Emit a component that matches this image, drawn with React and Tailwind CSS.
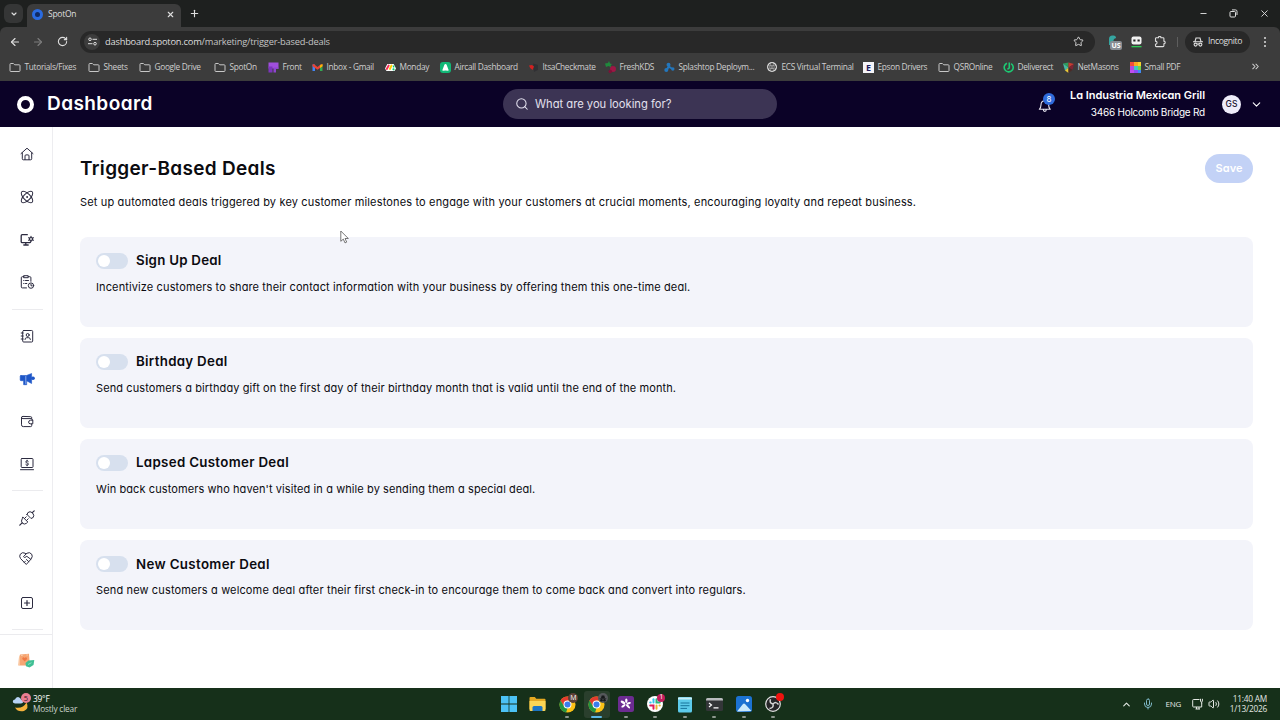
import { ArrowLeft, ArrowRight, ChevronDown, ChevronUp, ChevronsRight, Globe, Mic, Minus, Plus, RotateCw, Search, Star, Volume2, X } from 'lucide-react';

const bookmarks = [
  { icon: 'folder', label: 'Tutorials/Fixes', width: 'w-[79px]' },
  { icon: 'folder', label: 'Sheets', width: 'w-[51px]' },
  { icon: 'folder', label: 'Google Drive', width: 'w-[75px]' },
  { icon: 'folder', label: 'SpotOn', width: 'w-[54px]' },
  { icon: 'front', label: 'Front', width: 'w-[44px]' },
  { icon: 'gmail', label: 'Inbox - Gmail', width: 'w-[73px]' },
  { icon: 'monday', label: 'Monday', width: 'w-[55px]' },
  { icon: 'aircall', label: 'Aircall Dashboard', width: 'w-[88px]' },
  { icon: 'itsa', label: 'ItsaCheckmate', width: 'w-[77px]' },
  { icon: 'fresh', label: 'FreshKDS', width: 'w-[59px]' },
  { icon: 'splash', label: 'Splashtop Deploym...', width: 'w-[103px]' },
  { icon: 'globe', label: 'ECS Virtual Terminal', width: 'w-[96px]' },
  { icon: 'epson', label: 'Epson Drivers', width: 'w-[75px]' },
  { icon: 'folder', label: 'QSROnline', width: 'w-[65px]' },
  { icon: 'deliverect', label: 'Deliverect', width: 'w-[60px]' },
  { icon: 'netmasons', label: 'NetMasons', width: 'w-[67px]' },
  { icon: 'pdf', label: 'Small PDF', width: 'w-[60px]' },
];

const deals = [
  {
    title: 'Sign Up Deal',
    titleClass: 'tracking-[0.240px]',
    text: 'Incentivize customers to share their contact information with your business by offering them this one-time deal.',
    textClass: 'tracking-[0.120px]',
  },
  {
    title: 'Birthday Deal',
    titleClass: 'tracking-[0.300px]',
    text: 'Send customers a birthday gift on the first day of their birthday month that is valid until the end of the month.',
    textClass: 'tracking-[0.107px]',
  },
  {
    title: 'Lapsed Customer Deal',
    titleClass: 'tracking-[0.320px]',
    text: "Win back customers who haven't visited in a while by sending them a special deal.",
    textClass: 'tracking-[0.090px]',
  },
  {
    title: 'New Customer Deal',
    titleClass: 'tracking-[0.350px]',
    text: 'Send new customers a welcome deal after their first check-in to encourage them to come back and convert into regulars.',
    textClass: 'tracking-[0.140px]',
  },
];

function BookmarkIcon({ name }) {
  const box = 'h-[11px] w-[11px] shrink-0';
  switch (name) {
    case 'folder':
      return (
        <svg className="h-[11px] w-3 shrink-0" viewBox="0 0 12 11" fill="none" stroke="#c7c7c7" strokeWidth="1">
          <path d="M1 2.300q0-.8.8-.8H4.400l1.300 1.300H10.200q.8 0 .8.8V8.700q0 .8-.8.8H1.800q-.8 0-.8-.8Z" />
        </svg>
      );
    case 'front':
      return (
        <svg className={box} viewBox="0 0 11 11">
          <path d="M.5.500h10v6H.5z" fill="#a04fdd" />
          <path d="M.5 4.500h4v6h-4z" fill="#7c35bd" />
          <path d="M5.500 5.500h5v1.500H8v3.500H5.500z" fill="#8f45d0" />
        </svg>
      );
    case 'gmail':
      return (
        <svg className={box} viewBox="0 0 11 11">
          <path d="M.5 2.500H3V9H.5z" fill="#4285f4" />
          <path d="M8 2.500h2.500V9H8z" fill="#34a853" />
          <path d="M.5 2.500 1.800 2l3.700 2.900L9.200 2l1.300.5v1.800l-5 3.500-5-3.500z" fill="#ea4335" />
          <path d="M8 3.500 10.500 2v2.300L8 6z" fill="#fbbc04" />
        </svg>
      );
    case 'monday':
      return (
        <svg className={box} viewBox="0 0 11 11">
          <path d="M2.300 2h6.400L11 6.500 9.500 9h-8L0 6.500z" fill="#fff" />
          <g strokeWidth="1.900" strokeLinecap="round">
            <path d="M3.700 3.500 1.800 7" stroke="#f62b54" />
            <path d="M6.500 3.500 4.900 7" stroke="#fc0" />
          </g>
          <path d="M8.600 3.500v2" stroke="#00ca72" strokeWidth="1.500" />
          <circle cx="8.500" cy="7.300" r="1.100" fill="#00ca72" />
        </svg>
      );
    case 'aircall':
      return (
        <svg className={box} viewBox="0 0 11 11">
          <rect width="11" height="11" rx="3" fill="#12b877" />
          <path d="M5.500 2q.8 0 1.100.8l2 5.200q.2.900-.7.800-2.400-.4-4.800 0-.9.100-.7-.8l2-5.200Q4.700 2 5.500 2Z" fill="#fff" />
        </svg>
      );
    case 'itsa':
      return (
        <svg className={box} viewBox="0 0 11 11">
          <path d="M5 1.500 10 3v5L6 10z" fill="#303034" />
          <path d="M1 3.500 4 3l2 1.500L4.500 8Q2 7 1 3.500Z" fill="#d32020" />
        </svg>
      );
    case 'fresh':
      return (
        <svg className="-mr-px -ml-px h-[13px] w-[13px] shrink-0" viewBox="0 0 13 13">
          <path d="M1 2.500 4 2l1-2 1 2.500L8 3 6.500 4.500l1 2L4.500 5 2 6z" fill="#1f8a3c" />
          <circle cx="9" cy="8" r="3" fill="#9d1745" />
          <circle cx="6.300" cy="10.500" r="1.800" fill="#7d1237" />
        </svg>
      );
    case 'splash':
      return (
        <svg className={box} viewBox="0 0 11 11" fill="#2377bd">
          <circle cx="4.500" cy="2.700" r="2" />
          <circle cx="2.300" cy="8" r="2" />
          <circle cx="8.800" cy="7" r="1.700" />
          <path d="M2 7 4.500 3l4.500 3.500-1 1L5 6 3.500 9z" />
        </svg>
      );
    case 'globe':
      return (
        <span className="mr-px flex h-[10px] w-[10px] shrink-0 items-center justify-center rounded-full bg-[#dadada]">
          <Globe className="h-2 w-2 text-[#4a4a4a]" strokeWidth={3} />
        </span>
      );
    case 'epson':
      return (
        <span className="flex h-[11px] w-[11px] shrink-0 items-center justify-center bg-[#f4f4f8] text-[9px] leading-none font-bold text-[#1b1b5c]">
          E
        </span>
      );
    case 'deliverect':
      return (
        <svg className={box} viewBox="0 0 11 11" fill="none" stroke="#1dc973" strokeWidth="1.600">
          <path d="M4 1.200a4.500 4.500 0 1 0 4.200.4" />
          <path d="M6.300.5v5q-.2 1.500-2 1.200" />
        </svg>
      );
    case 'netmasons':
      return (
        <svg className={box} viewBox="0 0 11 11">
          <path d="M0 1.500 5.500.5v5z" fill="#2d9d5b" />
          <path d="M5.500.5 11 2 5.500 5.500z" fill="#c53b32" />
          <path d="M0 1.500 5.500 5.500 2 8.500z" fill="#46b9a2" />
          <path d="M5.500 5.500 11 2 9.500 8z" fill="#7b2433" />
          <path d="M2 8.500 5.500 5.500V11z" fill="#e8c93a" />
          <path d="M5.500 5.500 9.500 8l-4 3z" fill="#4d2a27" />
        </svg>
      );
    default:
      return (
        <svg className={box} viewBox="0 0 11 11">
          <path d="M0 0h4v4H0z" fill="#f0503c" />
          <path d="M4 0h4v4H4z" fill="#f7a823" />
          <path d="M8 0h3v4H8z" fill="#f6d22c" />
          <path d="M0 4h4v4H0z" fill="#b548e0" />
          <path d="M4 4h4v4H4z" fill="#3fc8c0" />
          <path d="M8 4h3v4H8z" fill="#6fd34e" />
          <path d="M0 8h4v3H0z" fill="#c04df0" />
          <path d="M4 8h4v3H4z" fill="#8b4df5" />
          <path d="M8 8h3v3H8z" fill="#3f8bf4" />
        </svg>
      );
  }
}

function BrowserChrome() {
  return (
    <div className="h-[81px] shrink-0 bg-[#1e201f] font-['Open_Sans','Noto_Sans',sans-serif] text-[#dedede]">
      <div className="flex h-[27px] items-start">
        <div className="mt-1 ml-1 flex h-[19px] w-[19px] items-center justify-center rounded-md bg-[#353636]">
          <ChevronDown className="h-2 w-2" strokeWidth={3.5} />
        </div>
        <div className="mt-1 ml-1 flex h-[23px] w-[154px] items-center rounded-t-md bg-[#3c3c3c] pr-[6px] pb-[3px] pl-[5px]">
          <span className="h-[11px] w-[11px] rounded-full border-[3.5px] border-[#2a6be0] bg-[#102a63]" />
          <span className="ml-[5px] flex-1 text-[8.500px] tracking-[-0.25px]">SpotOn</span>
          <X className="h-[9px] w-[9px]" strokeWidth={3} />
        </div>
        <div className="flex h-[27px] flex-1 items-center">
          <Plus className="ml-2 h-[11px] w-[11px]" strokeWidth={2.5} />
        </div>
        <div className="flex h-[27px] items-center">
          <Minus className="mr-[21px] h-[9px] w-[9px]" strokeWidth={2.5} />
          <svg className="h-[9px] w-[9px]" viewBox="0 0 9 9" fill="none" stroke="currentColor">
            <rect x="1" y="2.500" width="5.500" height="5.500" rx="1" />
            <path d="M3 .9h3.500q1.500 0 1.500 1.500V6" />
          </svg>
          <X className="mr-[10px] ml-[21px] h-[11px] w-[11px]" strokeWidth={2} />
        </div>
      </div>

      <div className="flex h-[29px] items-center rounded-t-md bg-[#3c3c3c]">
        <ArrowLeft className="ml-[9px] h-3 w-3" strokeWidth={2.300} />
        <ArrowRight className="ml-[11px] h-3 w-3 text-[#7c7c7c]" strokeWidth={2.300} />
        <RotateCw className="ml-[13px] h-[11px] w-[11px]" strokeWidth={2.400} />
        <div className="ml-[12px] flex h-[22px] w-[1015px] items-center rounded-full bg-[#282828] pr-[11px] pl-1">
          <span className="flex h-4 w-4 items-center justify-center rounded-full bg-[#3c3c3c]">
            <svg className="h-[9px] w-[9px]" viewBox="0 0 9 9" fill="none" stroke="currentColor">
              <circle cx="2" cy="2.300" r="1.300" />
              <path d="M4.500 2.300H9M0 6.700h4.500" />
              <circle cx="7" cy="6.700" r="1.300" />
            </svg>
          </span>
          <span className="ml-[5px] flex-1 text-[9.300px] tracking-[-0.21px] whitespace-nowrap">
            dashboard.spoton.com<span className="text-[#c4c4c4]">/marketing/trigger-based-deals</span>
          </span>
          <Star className="h-[11px] w-[11px]" strokeWidth={2} />
        </div>
        <span className="relative ml-[13px] h-[14px] w-[13px]">
          <svg className="h-[11px] w-[11px]" viewBox="0 0 11 11">
            <path d="M1 10V4q0-3.500 3.500-3.500h1Q8 .5 8 3L6 4 4 10z" fill="#35a5a0" />
          </svg>
          <span className="absolute top-[6px] left-[2px] flex h-[9px] w-[12px] items-center justify-center rounded-[2px] bg-[#888d94] text-[7px] leading-none font-bold text-white">
            US
          </span>
        </span>
        <svg className="ml-[10px] h-3 w-[11px]" viewBox="0 0 11 12">
          <rect x=".5" y=".5" width="10" height="8" rx="2" fill="#f2f2f2" />
          <path d="M2.300 3.500h2.200v2H2.300zM6.500 3.500h2.200v2H6.500z" fill="#222" />
          <path d="M.5 10h10v1.300H.5z" fill="#2ecc55" />
        </svg>
        <svg className="ml-[12px] h-3 w-3" viewBox="0 0 12 12" fill="none" stroke="currentColor" strokeWidth="1.100">
          <path d="M2.500 1.700h1.900a1.300 1.300 0 0 1 2.600 0H9q.9 0 .9.900v2.500a1.300 1.300 0 0 1 0 2.600V9.700q0 .9-.9.900H2.300q-.8 0-.8-.9V8.200a1.500 1.500 0 0 0 0-3.100V2.600q0-.9 1-.9z" />
        </svg>
        <span className="ml-[11px] h-[10px] w-px bg-[#5e5e5e]" />
        <div className="ml-[7px] flex h-[22px] w-[65px] items-center rounded-full bg-[#282828] pl-2">
          <svg className="h-[10px] w-[10px]" viewBox="0 0 10 10" fill="none" stroke="currentColor" strokeWidth="1.100">
            <path d="M0 4.700h10M2 4.500 3 1h4l1 3.500M4.200 7.200q.8-.6 1.600 0" />
            <circle cx="2.600" cy="7.600" r="1.500" />
            <circle cx="7.400" cy="7.600" r="1.500" />
          </svg>
          <span className="mt-px ml-[5px] text-[8.700px] tracking-[-0.4px]">Incognito</span>
        </div>
        <span className="ml-[14px] flex flex-col gap-[2px]">
          <span className="h-[2px] w-[2px] rounded-full bg-[#dedede]" />
          <span className="h-[2px] w-[2px] rounded-full bg-[#dedede]" />
          <span className="h-[2px] w-[2px] rounded-full bg-[#dedede]" />
        </span>
      </div>

      <div className="flex h-[25px] items-start bg-[#3c3c3c] pl-[9px] text-[8.300px] text-[#cfcfcf]">
        {bookmarks.map((item) => (
          <div key={item.label} className={`flex h-[22px] shrink-0 items-center ${item.width}`}>
            <BookmarkIcon name={item.icon} />
            <span className="ml-[3.500px] tracking-[-0.3px] whitespace-nowrap">{item.label}</span>
          </div>
        ))}
        <ChevronsRight className="mt-[5px] ml-[60px] h-[11px] w-[11px]" strokeWidth={2.300} />
      </div>
    </div>
  );
}

function Header() {
  return (
    <header className="flex h-[46px] shrink-0 items-center bg-[#0b0227] text-white">
      <span className="ml-[17px] h-[17px] w-[17px] rounded-full border-[4.500px] border-white" />
      <span className="ml-[13px] w-[456px] text-[19px] font-semibold tracking-[0.430px]">Dashboard</span>
      <div className="flex h-[30px] w-[274px] items-center rounded-full bg-[#3c3454] text-[#e3e0ee]">
        <Search className="ml-3 h-[14px] w-[14px]" strokeWidth={1.800} />
        <span className="mt-px ml-[6px] text-[11.200px] whitespace-nowrap">What are you looking for?</span>
      </div>
      <div className="relative ml-[261px] h-[18px] w-[18px]">
        <svg className="mt-1 h-[14px] w-[14px]" viewBox="0 0 14 14" fill="none" stroke="#e8e6f0" strokeWidth="1.100" strokeLinejoin="round">
          <path d="M1.300 10.300Q3 8.800 3 5.800 3 2 6.800 1.800q3.800.2 3.800 4 0 3 1.700 4.500zM5.300 10.500q0 1.900 1.500 1.900t1.500-1.900" />
        </svg>
        <span className="absolute -top-[2px] left-[5px] flex h-[12px] w-[12px] items-center justify-center rounded-full bg-[#2f6bdc] text-[8px] leading-none text-white">
          8
        </span>
      </div>
      <div className="mb-[2px] flex w-[149px] flex-col items-end whitespace-nowrap">
        <span className="text-[11px] leading-[17px] font-semibold tracking-[-0.03px]">La Industria Mexican Grill</span>
        <span className="text-[10px] leading-[16px] tracking-[-0.23px]">3466 Holcomb Bridge Rd</span>
      </div>
      <span className="ml-[17px] flex h-[19px] w-[19px] items-center justify-center rounded-full bg-[#efedfa] text-[8.500px] font-medium text-[#1a1530]">
        GS
      </span>
      <ChevronDown className="ml-[9px] h-[13px] w-[13px]" strokeWidth={2} />
    </header>
  );
}

function NavItem({ children }) {
  return (
    <div className="flex h-[42.670px] shrink-0 items-center justify-center pl-px">
      <svg className="h-4 w-4" viewBox="0 0 16 16" fill="none" stroke="#2c2b40" strokeWidth="1" strokeLinecap="round" strokeLinejoin="round">
        {children}
      </svg>
    </div>
  );
}

function NavDivider() {
  return <div className="mr-[9px] ml-3 my-[5px] h-px shrink-0 bg-[#ebebee]" />;
}

function Sidebar() {
  return (
    <aside className="flex w-[53px] shrink-0 flex-col border-r border-[#ededf0] bg-white">
      <nav className="flex h-[508px] shrink-0 flex-col border-b border-[#ebebee] pt-[6px]">
        <NavItem>
          <path d="M2 7.600 8 2.200l6 5.400M3.300 6.800v6q0 1 1 1h7.400q1 0 1-1v-6M6 13.500V9.900q0-1 1-1h2q1 0 1 1v3.600" />
        </NavItem>
        <NavItem>
          <ellipse cx="8" cy="8" rx="7.400" ry="3.300" transform="rotate(45 8 8)" />
          <ellipse cx="8" cy="8" rx="7.400" ry="3.300" transform="rotate(-45 8 8)" />
          <circle cx="8" cy="8" r=".5" />
        </NavItem>
        <NavItem>
          <path d="M8.300 2.700H3.200q-1 0-1 1v6q0 1 1 1h7.600q.7 0 .7-.9M6.800 10.700v2.300M4.800 13h4.400" strokeWidth="1.300" />
          <circle cx="12" cy="7" r="1.500" strokeWidth="1.200" />
          <path d="M12 4.400v.9M12 8.700v.9M9.700 5.700l.8.500M13.500 7.800l.8.500M9.700 8.300l.8-.5M13.500 6.200l.8-.5" strokeWidth="1.200" />
        </NavItem>
        <NavItem>
          <path d="M5 2.700H3.300q-1 0-1 1v9.200q0 1 1 1h4.200M9.200 2.700h1.700q1 0 1 1v3.600" />
          <path d="M5 1.700h4.200v2H5zM4.700 6.500h.3M6.500 6.500h3M4.700 9.500h.3M6.500 9.500h1.300" />
          <circle cx="12" cy="11.600" r="2.700" />
          <path d="M12 10.200v1.600h1.200" />
        </NavItem>
        <NavDivider />
        <NavItem>
          <rect x="3.700" y="2.500" width="10" height="11.500" rx="1" />
          <path d="M2.200 5h2M2.200 8h2M2.200 11h2M6 11.500q0-1.800 1.700-1.800h2q1.700 0 1.700 1.800" />
          <circle cx="8.700" cy="7" r="1.500" />
        </NavItem>
        <NavItem>
          <path d="M2 4.500h5.500L12.600 2.500v10L7.500 9.700H7.700v4H4.600v-4H2q-.8 0-.8-.8V5.300q0-.8.8-.8z" fill="#1f57c8" stroke="#1f57c8" strokeWidth=".6" />
          <path d="M6.800 5.500v7" stroke="#a9c2f3" strokeWidth=".8" />
          <path d="M13.800 7.200h.3" stroke="#1f57c8" strokeWidth="3.500" />
        </NavItem>
        <NavItem>
          <path d="M12.700 5.300V4.700q0-1-1-1L4 3.400Q2.500 3.300 2.500 4.600v7.200q0 1.800 1.800 1.800h7.400q1 0 1-1v-1.500M2.500 4.600q.2 1 1.500 1h8.200q1 0 1 1v.7" />
          <path d="M13.800 7.300v3.500h-2.700q-1.500-.2-1.500-1.700t1.500-1.800z" />
        </NavItem>
        <NavItem>
          <rect x="2.200" y="2.500" width="11.800" height="9" rx=".8" />
          <path d="M1.500 13.700h13M9.300 5.500q-.5-.6-1.200-.6-1.300 0-1.300 1t1.300 1.100 1.300 1.100-1.300 1q-.8 0-1.300-.6M8.100 4.200v.7M8.100 9.100v.7" />
        </NavItem>
        <NavDivider />
        <NavItem>
          <path d="m.8 15.200 2.300-2.300M15.200.8l-1.900 1.900" strokeWidth="1.200" />
          <path d="m4 7.200 4.800 4.800-1.200 1.200q-2 1.600-4 .2-2.200-2-.4-4.800zM5.500 8.500l1.700-1.700M7.500 10.500l1.700-1.700" />
          <path d="m8 4.500 4 4q3-.5 2.800-3.200Q14 2 11 1.700 8.200 2 8 4.500Z" />
        </NavItem>
        <div className="-mt-[2px] mb-[2px] pr-px">
          <NavItem>
            <path d="M8 14.200 2.500 8.500Q1 6.300 2.300 4.200 4.300 1.700 7 3.200l1 .8 1-.8q2.700-1.500 4.700 1 1.300 2.100-.2 4.300z" />
            <path d="M8 4 5.500 6.700q.8 1.500 2.500.2l.8-.6 4 3M6.300 12.300l1.200-1.200M8.500 9.500l2.300 2.200" />
          </NavItem>
        </div>
        <NavItem>
          <rect x="2.500" y="2.500" width="11" height="11" rx="1.500" />
          <path d="M8 5.500v5M5.500 8h5" strokeWidth="1.200" />
        </NavItem>
        <NavDivider />
      </nav>
      <div className="flex flex-1 items-center justify-center pb-[3px] pl-px">
        <svg className="h-[17px] w-[17px]" viewBox="0 0 17 17">
          <path d="m2 2.500 9-.8.800 11.800H1.500z" fill="#f6a673" />
          <path d="m1 5 1-2.500v11H0z" fill="#f9c6a0" />
          <path d="M3.300 3.500h1.200M8.500 3h1.200" stroke="#fbd9bd" />
          <path d="M6.700 9.500 4.200 7q0-2 1.500-1.700l1 .8.9-.8q1.700-.2 1.500 1.600z" fill="#ef7a45" />
          <path d="m7.500 11 3-2.500 5.800-.5-.8 5-4 2.500-3.500-1.300z" fill="#3fbf94" />
          <path d="m10 12.500 3.500-1.800" stroke="#8ee0c2" />
        </svg>
      </div>
    </aside>
  );
}

function DealCard({ deal }) {
  return (
    <section className="h-[90px] rounded-lg bg-[#f3f4fa] px-4 pt-4">
      <div className="flex h-4 items-center gap-2">
        <span className="flex h-4 w-8 items-center rounded-full bg-[#d7e0ee] pl-[2px]">
          <span className="h-3 w-3 rounded-full bg-white" />
        </span>
        <h2 className={`text-[13.300px] font-semibold whitespace-nowrap ${deal.titleClass}`}>{deal.title}</h2>
      </div>
      <p className={`mt-[10px] text-[11px] leading-4 whitespace-nowrap ${deal.textClass}`}>{deal.text}</p>
    </section>
  );
}

function Content() {
  return (
    <main className="flex-1 bg-white pt-[27px] pr-[27px] pl-[27px] text-[#0b0b10]">
      <div className="flex h-[29px] items-center justify-between">
        <h1 className="pt-px text-[19px] font-semibold tracking-[0.320px]">Trigger-Based Deals</h1>
        <button className="h-[29px] w-12 rounded-full bg-[#c3d2f6] text-[11px] font-semibold text-white">Save</button>
      </div>
      <p className="mt-[11px] text-[11px] leading-4 tracking-[0.155px] whitespace-nowrap">
        Set up automated deals triggered by key customer milestones to engage with your customers at crucial moments, encouraging loyalty and repeat business.
      </p>
      <div className="mt-[26.500px] flex flex-col gap-[11.330px]">
        {deals.map((deal) => (
          <DealCard key={deal.title} deal={deal} />
        ))}
      </div>
    </main>
  );
}

function ChromeLogo() {
  return (
    <svg className="h-[17px] w-[17px]" viewBox="0 0 18 18">
      <circle cx="9" cy="9" r="8.500" fill="#fbc116" />
      <path d="M1.600 4.800A8.500 8.500 0 0 1 16.400 4.800H9L5.300 11z" fill="#e33b2e" />
      <path d="M1.600 4.800 5.500 11 9 13l-1.500 4.400A8.500 8.500 0 0 1 1.600 4.800Z" fill="#229342" />
      <circle cx="9" cy="9" r="4.200" fill="#fff" />
      <circle cx="9" cy="9" r="3.200" fill="#3b7ded" />
    </svg>
  );
}

function TaskIcon({ children, state }) {
  return (
    <div className={`relative flex h-[27px] w-[26px] items-center justify-center rounded-[3px] ${state === 'active' ? 'bg-[#2a3f2d]' : ''}`}>
      {children}
      {state === 'open' && <span className="absolute bottom-0 h-[2px] w-1 rounded-full bg-[#8d978e]" />}
      {state === 'active' && <span className="absolute bottom-0 h-[2px] w-[11px] rounded-full bg-[#5cb8e6]" />}
    </div>
  );
}

function Taskbar() {
  return (
    <footer className="flex h-8 shrink-0 items-center bg-[#16301a] font-['Open_Sans','Noto_Sans',sans-serif] text-[8.300px] text-white">
      <div className="flex w-[495.500px] items-center">
        <svg className="mb-[3px] ml-3 h-[20px] w-[20px]" viewBox="0 0 20 20">
          <path d="M14.500 9.500q3 6-2.500 8.500-6 1.500-9-3.500 8 1.500 11.500-5Z" fill="#f6b23c" />
          <path d="M3 10.500q-2.500-.3-2.200-2.200Q1.200 6.500 3 6.600q.9-3 3.800-2.400 2 .5 2.300 2.500 2.400.2 2.200 2.100-.3 1.700-2.300 1.700z" fill="#b8d3f5" />
          <circle cx="14" cy="5" r="5" fill="#ea7f92" />
          <text x="14" y="7.800" textAnchor="middle" fontSize="7.500" fill="#3a1520">5</text>
        </svg>
        <div className="ml-[1px] leading-[10.500px] tracking-[-0.2px] whitespace-nowrap">
          <div>39°F</div>
          <div className="text-[#ccd5cd]">Mostly clear</div>
        </div>
      </div>

      <div className="flex w-[620px] gap-[3.400px]">
        <TaskIcon>
          <svg className="h-4 w-4" viewBox="0 0 16 16" fill="#4cc2f5">
            <path d="M0 0h7.600v7.600H0zM8.400 0H16v7.600H8.400zM0 8.400h7.600V16H0zM8.400 8.400H16V16H8.400z" />
          </svg>
        </TaskIcon>
        <TaskIcon>
          <svg className="h-4 w-[17px]" viewBox="0 0 17 16">
            <path d="M.5 2q0-1 1-1h4.300l1.500 1.700H15.500q1 0 1 1V13H.5z" fill="#e5a822" />
            <path d="M.5 5h16v9q0 1-1 1h-14q-1 0-1-1z" fill="#fbd555" />
            <path d="M3.500 11.500q0-1.500 1.500-1.500h7q1.500 0 1.500 1.500V15h-10z" fill="#1c75c4" />
          </svg>
        </TaskIcon>
        <TaskIcon state="open">
          <ChromeLogo />
          <span className="absolute top-[2px] right-[2px] flex h-[10px] w-[10px] items-center justify-center rounded-full bg-[#5c4037] text-[7px] leading-none">M</span>
        </TaskIcon>
        <TaskIcon state="active">
          <ChromeLogo />
          <svg className="absolute top-[2px] right-[2px] h-[10px] w-[10px]" viewBox="0 0 10 10">
            <circle cx="5" cy="5" r="5" fill="#55585b" />
            <path d="M3 5 3.700 2.500h2.600L7 5l2 .7H1z" fill="#17191a" />
            <circle cx="3.500" cy="7.300" r="1.300" fill="#17191a" />
            <circle cx="6.500" cy="7.300" r="1.300" fill="#17191a" />
          </svg>
        </TaskIcon>
        <TaskIcon state="open">
          <svg className="h-4 w-4" viewBox="0 0 16 16">
            <rect width="16" height="16" rx="2.500" fill="#6c2c91" />
            <g fill="#fff">
              <ellipse cx="5" cy="6.300" rx="2.600" ry="1.300" transform="rotate(30 5 6.300)" />
              <ellipse cx="8.300" cy="4.800" rx="1.200" ry="2.300" />
              <ellipse cx="10.700" cy="7.300" rx="2.300" ry="1.100" transform="rotate(-20 10.700 7.300)" />
              <ellipse cx="5.500" cy="9.800" rx="2.500" ry="1.100" transform="rotate(-35 5.500 9.800)" />
              <ellipse cx="10" cy="10.300" rx="2.700" ry="1.100" transform="rotate(45 10 10.300)" />
            </g>
          </svg>
        </TaskIcon>
        <TaskIcon state="open">
          <svg className="h-4 w-4" viewBox="0 0 16 16">
            <circle cx="8" cy="8" r="8" fill="#fff" />
            <g strokeWidth="2" strokeLinecap="round">
              <path d="M6.500 3.200v3.300" stroke="#36c5f0" />
              <path d="M3.200 6.600h.5" stroke="#36c5f0" />
              <path d="M12.800 6.500H9.500V3.300" stroke="#2eb67d" fill="none" />
              <path d="M9.500 9.500v3.300M12.500 9.500h.3" stroke="#ecb22e" />
              <path d="M3.200 9.500h3.300v3.300" stroke="#e01e5a" fill="none" />
            </g>
          </svg>
          <span className="absolute top-[3px] right-[3px] flex h-2 w-2 items-center justify-center rounded-full bg-[#c31d5c] text-[6.500px] leading-none">1</span>
        </TaskIcon>
        <TaskIcon state="open">
          <svg className="h-[17px] w-[14px]" viewBox="0 0 14 17">
            <rect y="1" width="14" height="15.500" rx="1.500" fill="#5ccbea" />
            <path d="M0 1.500h14v2H0z" fill="#c9eef7" />
            <path d="M2.500 7h9M2.500 9.700h9M2.500 12.400h6.500" stroke="#16759c" />
          </svg>
        </TaskIcon>
        <TaskIcon state="open">
          <svg className="h-[15px] w-[17px]" viewBox="0 0 17 15">
            <rect y="1" width="17" height="13" rx="1.500" fill="#333638" />
            <path d="M0 3.500V2.500Q0 1 1.500 1h14Q17 1 17 2.500v1z" fill="#b9bcbe" />
            <path d="m3 6 2.500 2L3 10M7.500 10.800h5" fill="none" stroke="#fff" strokeWidth="1.200" />
          </svg>
        </TaskIcon>
        <TaskIcon state="open">
          <svg className="h-4 w-4" viewBox="0 0 16 16">
            <rect width="16" height="16" rx="2.500" fill="#1c72d2" />
            <path d="M1 15.500 7 8q1-1 2 0l6.500 7z" fill="#c9e9fb" />
            <circle cx="11.500" cy="4.500" r="1.700" fill="#fff" />
          </svg>
        </TaskIcon>
        <TaskIcon state="open">
          <svg className="h-4 w-4" viewBox="0 0 16 16">
            <circle cx="8" cy="8" r="7.300" fill="#262528" stroke="#e2e2e2" strokeWidth="1.200" />
            <g fill="none" stroke="#d6d6d6" strokeWidth="1.500">
              <path d="M8 8Q4 7 5.500 3.200M8 8q3-3 5.500.5M8 8q1 4-3.500 4.500" />
            </g>
          </svg>
          <span className="absolute top-[2px] right-[2px] h-2 w-2 rounded-full bg-[#f0130f]" />
        </TaskIcon>
      </div>

      <div className="flex flex-1 items-center text-[#e3e8e3]">
        <ChevronUp className="ml-[5px] h-[11px] w-[11px]" strokeWidth={2.500} />
        <Mic className="ml-[10px] h-3 w-3 text-[#7fb9c8]" strokeWidth={2} />
        <span className="ml-3 text-[8px] tracking-[-0.2px]">ENG</span>
        <svg className="ml-[11px] h-3 w-3" viewBox="0 0 12 12" fill="none" stroke="currentColor">
          <path d="M7.500 1.500h-6q-.8 0-.8.8v6q0 .7.800.7h8.200V5.500M3.500 11h4.500M4.500 9v2M7 9v2" />
          <path d="M8.500.8v2.400q0 .8.900.8t1-.8V.8M9.700 4v2" />
        </svg>
        <Volume2 className="ml-1 h-3 w-3" strokeWidth={2} />
        <div className="mr-[13px] flex-1 text-right leading-[10.500px] tracking-[-0.22px]">
          <div>11:40 AM</div>
          <div>1/13/2026</div>
        </div>
      </div>
    </footer>
  );
}

export default function App() {
  return (
    <div className="relative flex h-[720px] w-[1280px] flex-col overflow-hidden bg-white font-['Inter','Open_Sans',sans-serif] [font-feature-settings:'cv11']">
      <BrowserChrome />
      <Header />
      <div className="flex min-h-0 flex-1">
        <Sidebar />
        <Content />
      </div>
      <Taskbar />
      <svg className="absolute top-[230px] left-[340px] h-[14px] w-[10px]" viewBox="0 0 10 14">
        <path d="M.8 1v10.300l2.500-2.200 1.700 3.800 1.700-.8L5 8.500h3.300z" fill="#fff" stroke="#555" strokeWidth=".8" />
      </svg>
    </div>
  );
}
